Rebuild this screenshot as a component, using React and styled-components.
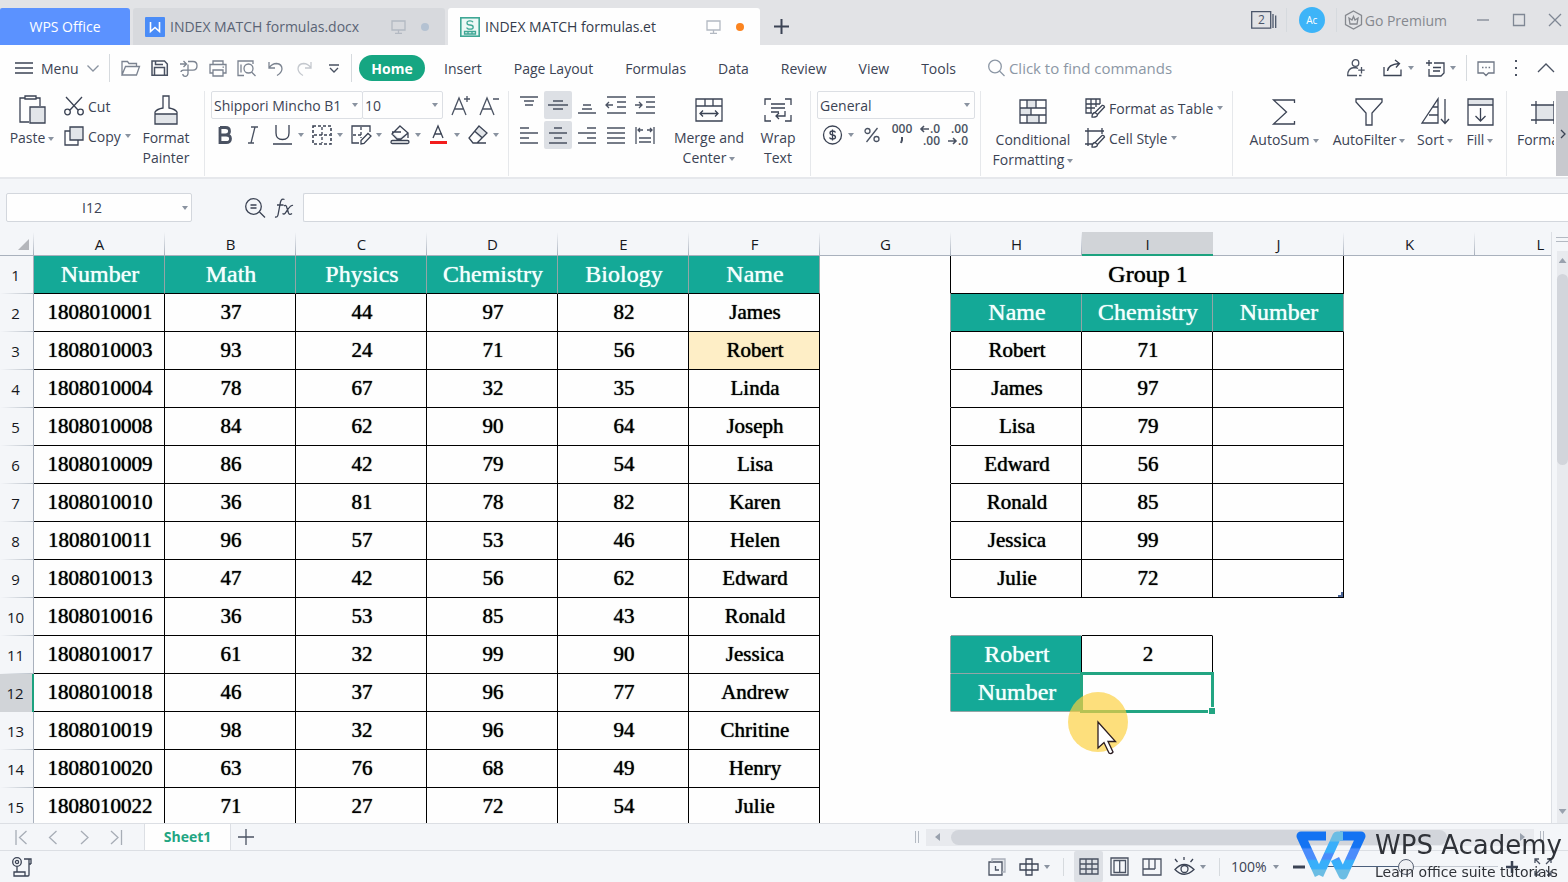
import React from "react";
import styled, { createGlobalStyle } from "styled-components";

const GlobalStyle = createGlobalStyle`
  * {
    box-sizing: border-box;
  }

  body {
    margin: 0;
    font-family: "Open Sans", "Noto Sans", sans-serif;
    font-size: 14px;
    color: #3b4354;
    background: #f4f6f9;
    overflow: hidden;
  }

  button,
  input,
  select {
    font: inherit;
    color: inherit;
  }
`;

const Page = styled.div`
  display: flex;
  flex-direction: column;
  height: 100vh;
  overflow: hidden;
`;

const Svg = styled.svg`
  display: block;
  flex: none;
  fill: none;
  stroke: currentColor;
  stroke-width: ${(props) => props.$sw || 1.3};
  overflow: visible;
`;

const PlainButton = styled.button`
  display: flex;
  align-items: center;
  padding: 0;
  border: 0;
  background: none;
  white-space: nowrap;
`;

const Divider = styled.span`
  flex: none;
  width: 1px;
  height: ${(props) => props.$height || 28}px;
  margin-right: ${(props) => props.$after || 0}px;
  background: #d6dade;
`;

const Spacer = styled.span`
  flex: 1;
`;

const CaretShape = styled.span`
  display: inline-block;
  flex: none;
  margin-left: ${(props) => (props.$inline ? "3px" : "0")};
  border: 3px solid transparent;
  border-top: 4px solid #8a93a0;
  border-bottom: 0;
  vertical-align: middle;
`;

/* Title bar */

const TitleBar = styled.header`
  display: flex;
  flex: none;
  height: 45px;
  background: #e2e3e6;
`;

const FileTabs = styled.nav`
  display: flex;
  align-items: flex-end;
  gap: 3px;
`;

const OfficeTab = styled.button`
  width: 130px;
  height: 37px;
  border: 0;
  border-radius: 2px 3px 0 0;
  background: #5b92ff;
  color: #fff;
`;

const FileTab = styled.button`
  display: flex;
  align-items: center;
  width: 312px;
  height: 37px;
  padding: 0 16px 0 12px;
  border: 0;
  border-radius: 3px 3px 0 0;
  background: ${(props) => (props.$active ? "#fefefe" : "#d7d9dd")};
  color: ${(props) => (props.$active ? "#343b4b" : "#5a6475")};
`;

const FileName = styled.span`
  flex: 1;
  padding-left: 5px;
  text-align: left;
  white-space: nowrap;
`;

const Dot = styled.span`
  width: 8px;
  height: 8px;
  margin-left: 15px;
  border-radius: 50%;
  background: ${(props) => props.$color};
`;

const NewTab = styled(PlainButton)`
  height: 37px;
  padding: 0 11px;
`;

const WindowTools = styled.div`
  display: flex;
  align-items: center;
  height: 40px;
  margin-left: auto;
  padding-right: 3px;
  color: #7f8794;
`;

const Avatar = styled.button`
  width: 26px;
  height: 26px;
  margin: 0 11px 0 12px;
  padding: 0;
  border: 0;
  border-radius: 50%;
  background: #3db4f8;
  color: #fff;
  font-size: 10px;
`;

const Premium = styled(PlainButton)`
  gap: 2px;
  margin: 0 18px 0 7px;
  color: #85888e;
`;

const WindowButton = styled(PlainButton)`
  justify-content: center;
  width: 36px;

  &:last-child {
    width: 20px;
    margin-left: 8px;
  }
`;

/* Menu bar */

const MenuBar = styled.div`
  display: flex;
  align-items: center;
  flex: none;
  height: 46px;
  background: #fefefe;
`;

const MenuButton = styled(PlainButton)`
  gap: 8px;
  width: 109px;
  padding-left: 15px;
  color: #3b4354;
`;

const QuickTools = styled.div`
  display: flex;
  padding: 0 3px 0 6px;
`;

const IconButton = styled(PlainButton)`
  justify-content: center;
  width: ${(props) => props.$width || 29}px;
  height: 28px;
  color: ${(props) => props.$color || "#4a5262"};
  background: ${(props) => (props.$active ? "#dde0e5" : "none")};
  border-radius: 2px;
`;

const SplitButton = styled(PlainButton)`
  gap: 5px;
  width: ${(props) => props.$width || 39}px;
  height: 28px;
  padding-left: 6px;
`;

const MenuTabs = styled.nav`
  display: flex;
  align-items: center;
  padding-left: 7px;
`;

const MenuTab = styled.button`
  height: 26px;
  padding: 0 16px;
  border: 0;
  background: none;
  white-space: nowrap;
`;

const ActiveTab = styled(MenuTab)`
  width: 66px;
  margin-right: 3px;
  padding: 0;
  border-radius: 13px;
  background: #16a682;
  color: #fff;
  font-weight: 700;
`;

const CommandSearch = styled.label`
  display: flex;
  align-items: center;
  gap: 4px;
  margin-left: 16px;
  color: #8c97a5;
`;

const CommandInput = styled.input`
  width: 190px;
  padding: 0;
  border: 0;
  background: none;
  font-size: 15px;
  outline: none;

  &::placeholder {
    color: #8c97a5;
    opacity: 1;
  }
`;

const MenuTools = styled.div`
  display: flex;
  align-items: center;
  margin-left: auto;
  padding-right: 3px;
`;

/* Ribbon */

const RibbonBar = styled.section`
  display: flex;
  flex: none;
  gap: 2px;
  height: 88px;
  border-bottom: 2px solid #e6e8ec;
  background: #fefefe;
`;

const RibbonTools = styled.div`
  display: flex;
  flex: 1;
  min-width: 0;
  overflow: hidden;
`;

const RibbonGroup = styled.div`
  display: flex;
  flex: none;
  align-items: flex-start;
  height: 85px;
  padding: ${(props) => props.$padding || "0"};
  border-right: 1px solid #e6e8eb;

  &:last-child {
    border-right: 0;
  }
`;

const ToolRows = styled.div`
  display: flex;
  flex-direction: column;
  gap: 2px;
`;

const ToolRow = styled.div`
  display: flex;
  align-items: center;
  gap: ${(props) => props.$gap || 0}px;
  height: 28px;
`;

const BigButton = styled.button`
  display: flex;
  flex-direction: column;
  align-items: center;
  width: ${(props) => props.$width}px;
  padding: 0;
  border: 0;
  background: none;
  line-height: 20px;
  white-space: nowrap;
`;

const BigIcon = styled.span`
  display: flex;
  align-items: center;
  height: 37px;
`;

const ListButtons = styled.div`
  width: ${(props) => props.$width}px;
`;

const ListButton = styled(PlainButton)`
  gap: 4px;
  height: 30px;
`;

const SelectBox = styled.span`
  position: relative;
  display: block;
  width: ${(props) => props.$width}px;
  margin-left: ${(props) => (props.$joined ? "-1px" : "0")};
  margin-right: ${(props) => (props.$joined ? "3px" : "0")};

  &::after {
    content: "";
    position: absolute;
    top: 12px;
    right: 5px;
    border: 3px solid transparent;
    border-top: 4px solid #8a93a0;
    border-bottom: 0;
    pointer-events: none;
  }
`;

const Select = styled.select`
  display: block;
  width: 100%;
  height: 28px;
  padding: 0 2px;
  border: 1px solid #dcdfe4;
  border-radius: 2px;
  background: #fefefe;
  appearance: none;
`;

const NumberMark = styled.span`
  display: flex;
  flex-direction: column;
  align-items: ${(props) => (props.$center ? "center" : "flex-end")};
  font-size: 12px;
  line-height: 12px;
  font-weight: 600;
`;

const MarkLine = styled.span`
  display: flex;
  align-items: center;
  gap: 1px;
`;

const RibbonHandle = styled.button`
  flex: none;
  width: 12px;
  height: 85px;
  padding: 0;
  border: 0;
  background: #c8c9ce;
`;

/* Formula bar */

const FormulaBar = styled.div`
  display: flex;
  align-items: center;
  flex: none;
  height: 53px;
  padding: 4px 0 0 6px;
`;

const NameBox = styled.span`
  display: flex;
  align-items: center;
  width: 186px;
  height: 29px;
  padding-right: 3px;
  border: 1px solid #d3d7dd;
  border-radius: 2px;
  background: #fefefe;
`;

const NameInput = styled.input`
  flex: 1;
  min-width: 0;
  padding: 0 5px 0 0;
  border: 0;
  background: none;
  text-align: center;
`;

const FormulaTools = styled.div`
  display: flex;
  gap: 9px;
  padding: 0 9px 0 53px;
`;

const FormulaInput = styled.input`
  flex: 1;
  min-width: 0;
  height: 29px;
  border: 1px solid #d3d7dd;
  border-right: 0;
  border-radius: 2px 0 0 2px;
  background: #fefefe;
`;

/* Sheet */

const SheetArea = styled.main`
  display: flex;
  flex: 1;
  min-height: 0;
`;

const SheetView = styled.div`
  flex: 1;
  min-width: 0;
  overflow: hidden;
  background: linear-gradient(#f4f6f9 23px, #a9b1bd 23px, #a9b1bd 24px, #fefefe 24px);
`;

const Grid = styled.table`
  width: 1606px;
  table-layout: fixed;
  border-collapse: separate;
  border-spacing: 0;
`;

const Corner = styled.td`
  width: 34px;
  height: 24px;
  padding: 0 5px 5px 0;
  border-bottom: 1px solid #a9b1bd;
  background: linear-gradient(#f4f6f9, #a9b1bd) right / 1px 100% no-repeat #f4f6f9;
  vertical-align: bottom;
`;

const CornerShape = styled.span`
  display: block;
  width: 11px;
  height: 11px;
  margin-left: auto;
  background: #b4b6bb;
  clip-path: polygon(100% 0, 100% 100%, 0 100%);
`;

const ColumnHead = styled.th`
  width: 131px;
  height: 24px;
  padding: 0;
  border-bottom: 1px solid ${(props) => (props.$active ? "#1ca27f" : "#a9b1bd")};
  box-shadow: ${(props) => (props.$active ? "inset 0 -1px #1ca27f" : "none")};
  background: ${(props) =>
    props.$active
      ? "#d1d4d8"
      : "linear-gradient(#f4f6f9, #a9b1bd) right / 1px 100% no-repeat #f4f6f9"};
  color: #16181d;
  font-size: 15px;
  font-weight: 400;
  line-height: 20px;
`;

const RowHead = styled.th`
  height: 38px;
  padding: 0 2px 0 0;
  border-right: ${(props) => (props.$active ? "2px solid #1ca27f" : "1px solid #a9b1bd")};
  background: ${(props) =>
    props.$active
      ? "#d1d4d8"
      : "linear-gradient(90deg, #f4f6f9, #b9c0c9) bottom / 100% 1px no-repeat #f4f6f9"};
  color: #16181d;
  font-size: 15px;
  font-weight: 400;
`;

const Cell = styled.td`
  position: relative;
  height: 38px;
  padding: 0 0 0 2px;
  border-right: 1px solid ${(props) => props.$right || "transparent"};
  border-bottom: 1px solid ${(props) => props.$bottom || "transparent"};
  background: ${(props) => props.$fill || "#fefefe"};
  color: #000;
  font-family: "Liberation Serif", "Times New Roman", serif;
  font-size: ${(props) => (props.$title ? 24 : 21)}px;
  font-weight: 400;
  line-height: 35px;
  text-align: center;
  text-shadow: 0 0 1px currentColor;
`;

const HeadCell = styled(Cell)`
  background: #14a997;
  color: #f4fffd;
  font-size: 24px;
`;

const TableMark = styled.span`
  position: absolute;
  right: 0;
  bottom: 0;
  width: 5px;
  height: 5px;
  background: #4a6496;
  clip-path: polygon(60% 0, 100% 0, 100% 100%, 0 100%, 0 60%, 60% 60%);
`;

const Selection = styled.span`
  position: absolute;
  z-index: 1;
  inset: -2px;
  border: 3px solid #22a582;

  &::after {
    content: "";
    position: absolute;
    right: -4px;
    bottom: -4px;
    width: 6px;
    height: 6px;
    border: solid #fefefe;
    border-width: 1px 0 0 1px;
    background: #22a582;
  }
`;

const Pointer = styled.span`
  position: absolute;
  z-index: 2;
  top: 18px;
  left: -14px;
  width: 60px;
  height: 60px;
  padding: 29px 0 0 29px;
  border-radius: 50%;
  background: rgba(252, 208, 62, 0.68);
`;

const VerticalScroll = styled.div`
  display: flex;
  flex-direction: column;
  flex: none;
  width: 17px;
  padding: 5px 0 8px 4px;
  border-left: 1px solid #dcdfe4;
  background: #f4f6f9;
`;

const SplitGrip = styled.span`
  height: 5px;
  border: solid #b3b9c2;
  border-width: 1px 0;
`;

const VerticalTrack = styled.div`
  display: flex;
  flex-direction: column;
  flex: 1;
  align-items: center;
  margin: 9px 0 -8px 1px;
  padding: 7px 0 9px;
  background: #e8eaee;
`;

const VerticalThumb = styled.span`
  width: 100%;
  height: 191px;
  margin: 11px 0 auto;
  border-radius: 6px;
  background: #d2d5db;
`;

const Arrow = styled.span`
  flex: none;
  width: ${(props) => (props.$side ? 5 : 8)}px;
  height: ${(props) => (props.$side ? 8 : 5)}px;
  background: #9aa2ae;
  clip-path: ${(props) => props.$shape};
`;

/* Sheet tabs */

const SheetTabs = styled.div`
  display: flex;
  align-items: center;
  flex: none;
  height: 28px;
  padding-right: 24px;
  border-top: 1px solid #dcdfe4;
  border-bottom: 1px solid #dcdfe4;
`;

const SheetNav = styled.div`
  display: flex;
  width: 144px;
  padding-left: 5px;
`;

const SheetTab = styled.button`
  width: 87px;
  height: 27px;
  border: 1px solid #dcdfe4;
  border-top: 0;
  background: #fefefe;
  color: #22a582;
  font-weight: 700;
`;

const Grip = styled.span`
  flex: none;
  width: 4px;
  height: 12px;
  border: solid #b3b9c2;
  border-width: 0 1px;
`;

const HorizontalTrack = styled.div`
  display: flex;
  align-items: center;
  width: 608px;
  height: 17px;
  margin: 0 6px 0 7px;
  padding: 0 9px 0 9px;
  background: #e8eaee;
`;

const HorizontalThumb = styled.span`
  width: 496px;
  height: 15px;
  margin: 0 auto 0 11px;
  border-radius: 8px;
  background: #d2d5db;
`;

/* Status bar */

const StatusBar = styled.footer`
  display: flex;
  align-items: center;
  flex: none;
  height: 31px;
  padding: 0 0 0 12px;
`;

const ViewButton = styled(IconButton)`
  height: 31px;
  width: ${(props) => props.$width || 32}px;
`;

const ZoomLevel = styled(PlainButton)`
  gap: 6px;
  width: 62px;
  padding-left: 11px;
`;

const ZoomSlider = styled.input`
  width: 188px;
  height: 18px;
  margin: 0 8px 0 4px;
  appearance: none;
  background: linear-gradient(90deg, #4b5f7c 51%, #c5cad2 51%) center / 100% 1px no-repeat;

  &::-webkit-slider-thumb {
    appearance: none;
    width: 16px;
    height: 16px;
    border: 1px solid #596273;
    border-radius: 50%;
    background: #f0f1f4;
  }
`;

const Brand = styled.aside`
  position: fixed;
  z-index: 3;
  right: 8px;
  bottom: 0;
  display: flex;
  gap: 9px;
  height: 51px;
  color: #2f3238;
  font-family: "DejaVu Sans", sans-serif;
  white-space: nowrap;
  pointer-events: none;
`;

const BrandText = styled.div`
  width: 185px;
`;

const BrandName = styled.div`
  font-size: 26px;
  line-height: 28px;
`;

const BrandLine = styled.div`
  margin-top: 3px;
  font-size: 14px;
  line-height: 20px;
`;

const teal = "#14a997";
const black = "#000";
const grey = "#93a5a6";

const columns = ["A", "B", "C", "D", "E", "F", "G", "H", "I", "J", "K", "L"];

const headings = ["Number", "Math", "Physics", "Chemistry", "Biology", "Name"];

const students = [
  ["1808010001", 37, 44, 97, 82, "James"],
  ["1808010003", 93, 24, 71, 56, "Robert"],
  ["1808010004", 78, 67, 32, 35, "Linda"],
  ["1808010008", 84, 62, 90, 64, "Joseph"],
  ["1808010009", 86, 42, 79, 54, "Lisa"],
  ["1808010010", 36, 81, 78, 82, "Karen"],
  ["1808010011", 96, 57, 53, 46, "Helen"],
  ["1808010013", 47, 42, 56, 62, "Edward"],
  ["1808010016", 36, 53, 85, 43, "Ronald"],
  ["1808010017", 61, 32, 99, 90, "Jessica"],
  ["1808010018", 46, 37, 96, 77, "Andrew"],
  ["1808010019", 98, 32, 96, 94, "Chritine"],
  ["1808010020", 63, 76, 68, 49, "Henry"],
  ["1808010022", 71, 27, 72, 54, "Julie"],
];

const group = [
  ["Robert", 71],
  ["James", 97],
  ["Lisa", 79],
  ["Edward", 56],
  ["Ronald", 85],
  ["Jessica", 99],
  ["Julie", 72],
];

const menuTabs = ["Insert", "Page Layout", "Formulas", "Data", "Review", "View", "Tools"];

function Icon({ w = 20, h = 20, d, fill, sw, color, children }) {
  return (
    <Svg width={w} height={h} viewBox={`0 0 ${w} ${h}`} $sw={sw} color={color} aria-hidden="true">
      {fill && <path d={fill} fill="#e2e5e9" stroke="none" />}
      {d && <path d={d} />}
      {children}
    </Svg>
  );
}

function Monitor() {
  return <Icon w={15} h={14} color="#b3b9c2" d="M1 1h13v9h-13zM7.500 10v3M4 13.300h7" />;
}

function TopBar() {
  return (
    <TitleBar>
      <FileTabs>
        <OfficeTab>WPS Office</OfficeTab>
        <FileTab>
          <Icon>
            <rect width="20" height="20" rx="1" fill="#4a8cf7" stroke="none" />
            <path d="M5.500 5v9.500l4.500-4 4.500 4V5" stroke="#fff" strokeWidth="1.600" />
          </Icon>
          <FileName>INDEX MATCH formulas.docx</FileName>
          <Monitor />
          <Dot $color="#b4c2d2" />
        </FileTab>
        <FileTab $active>
          <Icon>
            <rect x=".8" y=".8" width="18.400" height="18.400" stroke="#3fa795" strokeWidth="1.600" fill="#ecf8f5" />
            <path
              d="M13 5.200Q12.500 3.800 10 3.800Q7 3.800 7 6Q7 8 10 8Q13.200 8 13.200 10.200Q13.200 12.200 10 12.200Q7 12.200 6.800 10.500M4.500 14.500h11v2.500h-11zM8 14.500v2.500M12 14.500v2.500"
              stroke="#3fa795"
            />
          </Icon>
          <FileName>INDEX MATCH formulas.et</FileName>
          <Monitor />
          <Dot $color="#fb8420" />
        </FileTab>
        <NewTab aria-label="New tab">
          <Icon w={15} h={15} sw={2} d="M7.500 0v15M0 7.500h15" />
        </NewTab>
      </FileTabs>
      <WindowTools>
        <PlainButton aria-label="Open windows">
          <Icon w={35} h={18} color="#4b566a" d="M.700.700h19v16.500h-19zM22 3v14M24.700 4.500v12.500">
            <text x="7" y="13" fontSize="12" fill="currentColor" stroke="none">2</text>
          </Icon>
        </PlainButton>
        <Divider $height={24} />
        <Avatar>Ac</Avatar>
        <Divider $height={24} />
        <Premium>
          <Icon w={19} h={20} d="M9.500 1l8 4.500v9l-8 4.500-8-4.500v-9zM5 8l1 6h7l1-6-3 2-1.500-3.500-1.500 3.500z" />
          Go Premium
        </Premium>
        <WindowButton aria-label="Minimize">
          <Icon w={12} h={12} d="M0 6h12" />
        </WindowButton>
        <WindowButton aria-label="Maximize">
          <Icon w={12} h={12} d="M.500.500h11v11h-11z" />
        </WindowButton>
        <WindowButton aria-label="Close">
          <Icon w={12} h={12} d="M0 0l12 12M12 0l-12 12" />
        </WindowButton>
      </WindowTools>
    </TitleBar>
  );
}

function Menu() {
  return (
    <MenuBar>
      <MenuButton>
        <Icon w={18} h={12} d="M0 1h18M0 6h18M0 11h18" />
        Menu
        <Icon w={12} h={7} color="#8a93a0" d="M.500.500l5.500 5.500 5.500-5.500" />
      </MenuButton>
      <Divider />
      <QuickTools>
        <IconButton aria-label="Open" $color="#7b8390">
          <Icon w={19} h={16} d="M1 15V1.500h5.500l1.500 2h7.500v3M1 15l3.500-8.500h14l-3 8.500z" />
        </IconButton>
        <IconButton aria-label="Save">
          <Icon w={17} h={16} d="M1 1h12.500l2.800 3v11.300h-15.300zM3.500 15V7.500h10v7.500M4.500 1v3.500h7.500" sw={1.5} />
        </IconButton>
        <IconButton aria-label="Export to PDF" $color="#7b8390">
          <Icon w={18} h={17} d="M0 4h6M3.500 1l3 3-3 3M8 1.500h5q4 0 4 4.300t-4 4.300h-9.500q-2.500.200-2.500 2M8 4.500v9q-.300 2.800-2.700 2.800t-2.500-2.300" />
        </IconButton>
        <IconButton aria-label="Print" $color="#7b8390">
          <Icon w={18} h={17} d="M4 4.500V1h10v3.500M4 13H1V4.500h16v8.500h-3M4 10h10v6h-10zM13.500 7.200h1.500" />
        </IconButton>
        <IconButton aria-label="Print preview" $color="#7b8390">
          <Icon w={19} h={17} d="M7 15.500h-6V1h15v3M4 4.500v8M14.500 12l4 4">
            <circle cx="11.500" cy="8.500" r="4.500" />
          </Icon>
        </IconButton>
        <IconButton aria-label="Undo" $color="#7b8390">
          <Icon w={15} h={15} d="M1 1v6h6M1 7Q4 2.500 8.500 2.500Q14 3 14 8Q13.500 12 9 14.500" />
        </IconButton>
        <IconButton aria-label="Redo" $color="#c4c8ce">
          <Icon w={15} h={15} d="M14 1v6h-6M14 7Q11 2.500 6.500 2.500Q1 3 1 8Q1.500 12 6 14.500" />
        </IconButton>
        <IconButton aria-label="Customize toolbar">
          <Icon w={10} h={9} d="M0 1h10M1 4l4 4 4-4" />
        </IconButton>
      </QuickTools>
      <Divider />
      <MenuTabs>
        <ActiveTab>Home</ActiveTab>
        {menuTabs.map((name) => (
          <MenuTab key={name}>{name}</MenuTab>
        ))}
      </MenuTabs>
      <CommandSearch>
        <Icon w={17} h={18} d="M11.500 12l5 5">
          <circle cx="7" cy="7.500" r="6.300" />
        </Icon>
        <CommandInput aria-label="Find commands" placeholder="Click to find commands" />
      </CommandSearch>
      <MenuTools>
        <IconButton aria-label="Add user" $width={42}>
          <Icon w={18} h={18} d="M10 16.500h-9.300Q.700 9 7 8.500q2.500 0 4 1M14.500 8v6.500M11.200 11.200h6.500M14.500 16.500h-2.500">
            <circle cx="8.500" cy="4" r="3.300" />
          </Icon>
        </IconButton>
        <SplitButton aria-label="Share" $width={43}>
          <Icon w={20} h={18} d="M1 8v8.500h17v-6M4.500 12Q5 5.500 16 4.500M12 1l4.500 3.500-3.500 4" />
          <CaretShape />
        </SplitButton>
        <SplitButton aria-label="New note" $width={46}>
          <Icon w={19} h={17} d="M3 0v6M0 3h6M8 3h10v10l-3 3h-12V9M7 7.500h8M7 11h7" />
          <CaretShape />
        </SplitButton>
        <Divider $height={26} />
        <IconButton aria-label="Comments" $width={38} $color="#6f7785">
          <Icon w={18} h={15} d="M1 1h16v11h-5.500l-2.500 2.500-2.500-2.500h-5.500zM5 6.500h1.500M8.300 6.500h1.500M11.600 6.500h1.500" />
        </IconButton>
        <IconButton aria-label="More" $width={22}>
          <Icon w={4} h={16} sw={2} d="M2 0v2M2 7v2M2 14v2" />
        </IconButton>
        <IconButton aria-label="Collapse ribbon" $width={38}>
          <Icon w={18} h={10} d="M1 9l8-8 8 8" />
        </IconButton>
      </MenuTools>
    </MenuBar>
  );
}

function Big({ width, icon, lines, caret }) {
  return (
    <BigButton $width={width}>
      <BigIcon>{icon}</BigIcon>
      {lines.map((line, i) => (
        <span key={line}>
          {line}
          {caret && i === lines.length - 1 && <CaretShape $inline />}
        </span>
      ))}
    </BigButton>
  );
}

function Ribbon() {
  return (
    <RibbonBar>
      <RibbonTools>
        <RibbonGroup $padding="0 8px 0 0">
          <Big
            width={64}
            caret
            lines={["Paste"]}
            icon={
              <Icon w={27} h={30} fill="M11 12h15v16h-15z" d="M6 3h-5v24h9M17 3h4v8M6 1h11v3h-11zM11 12h15v16h-15z" />
            }
          />
          <ListButtons $width={72}>
            <ListButton>
              <Icon w={20} h={20} d="M2 1l12 13M18 1l-12 13">
                <circle cx="3.500" cy="16" r="2.800" />
                <circle cx="16.500" cy="16" r="2.800" />
              </Icon>
              Cut
            </ListButton>
            <ListButton>
              <Icon fill="M6 1h13v13h-13z" d="M6 1h13v13h-13zM6 5h-5v14h13v-5" />
              Copy
              <CaretShape />
            </ListButton>
          </ListButtons>
          <Big
            width={60}
            lines={["Format", "Painter"]}
            icon={
              <Icon w={24} h={30} fill="M1 19h22v10h-22z" d="M9 1h6v12q6 1 8 4v12h-22v-12q2-3 8-4zM1 19h22" />
            }
          />
        </RibbonGroup>

        <RibbonGroup $padding="0 6px">
          <ToolRows>
            <ToolRow>
              <SelectBox $width={152}>
                <Select aria-label="Font">
                  <option>Shippori Mincho B1</option>
                </Select>
              </SelectBox>
              <SelectBox $width={81} $joined>
                <Select aria-label="Font size">
                  <option>10</option>
                </Select>
              </SelectBox>
              <IconButton $width={28} aria-label="Increase font size">
                <Icon w={19} h={19} d="M1 19l7-17 7 17M3.500 13h9M16 0v6M13 3h6" />
              </IconButton>
              <IconButton $width={28} aria-label="Decrease font size">
                <Icon w={19} h={19} d="M1 19l7-17 7 17M3.500 13h9M14 3h6" />
              </IconButton>
            </ToolRow>
            <ToolRow>
              <IconButton $width={28} aria-label="Bold">
                <Icon w={14} h={18} sw={2.8} d="M2 1.500h5.500q4 0 4 3.700t-4 3.700h-5.500M2 9h6q4.500 0 4.500 3.800t-4.500 3.700h-6zM2 1v16" />
              </IconButton>
              <IconButton $width={28} aria-label="Italic">
                <Icon w={12} h={18} d="M4 1h7M1 17h6M8 1l-4 16" />
              </IconButton>
              <SplitButton aria-label="Underline">
                <Icon w={20} h={20} d="M3 0v8q0 6.500 6.500 6.500t6.500-6.500V0M0 19h19" />
                <CaretShape />
              </SplitButton>
              <SplitButton aria-label="Borders">
                <Icon>
                  <path d="M1 1h18v18h-18z" strokeDasharray="3 2" strokeWidth="1.600" />
                  <path d="M10 2v16M2 10h16" strokeDasharray="3 2" />
                </Icon>
                <CaretShape />
              </SplitButton>
              <SplitButton aria-label="Draw borders">
                <Icon d="M19 7V1h-18v17h7M10 19v-3.500l7-7 3 2.500-7 7.500z">
                  <path d="M2 10h10M10 2v11" strokeDasharray="3 2" />
                </Icon>
                <CaretShape />
              </SplitButton>
              <SplitButton aria-label="Fill colour">
                <Icon fill="M3 8l6 5 8-5-2 5h-10z" d="M10 1l8 7-7 6h-4l-5-5zM2 7h9M18 8v5M2.500 15.500h15q1.500 0 1.500 1.500t-1.500 1.500h-15q-1.500 0-1.500-1.500t1.500-1.500z" />
                <CaretShape />
              </SplitButton>
              <SplitButton aria-label="Font colour">
                <Icon d="M4 13l5-12 5 12M6 9h7">
                  <path d="M1 17.500h17" stroke="#f21d1d" strokeWidth="3" />
                </Icon>
                <CaretShape />
              </SplitButton>
              <SplitButton aria-label="Clear">
                <Icon fill="M11 1l8 7-6 6-7-7z" d="M11 1l8 7-10 10h-4l-4-5zM6.500 6l8 7M9 18h9" />
                <CaretShape />
              </SplitButton>
            </ToolRow>
          </ToolRows>
        </RibbonGroup>

        <RibbonGroup $padding="0 13px 0 6px">
          <ToolRows>
            <ToolRow $gap={1}>
              <IconButton $width={28} aria-label="Align top">
                <Icon w={18} h={18} d="M0 1h18M4 5h10M5 9h8" />
              </IconButton>
              <IconButton $width={28} $active aria-label="Align middle">
                <Icon w={20} h={18} d="M5 5h10M0 9h20M5 13h10" />
              </IconButton>
              <IconButton $width={28} aria-label="Align bottom">
                <Icon w={18} h={18} d="M5 9h8M4 13h10M0 17h18" />
              </IconButton>
              <IconButton $width={28} aria-label="Decrease indent">
                <Icon w={20} h={18} d="M1 1h19M11 6h9M11 11h9M1 17h19M0 9h7M3 6l-3 3 3 3" />
              </IconButton>
              <IconButton $width={28} aria-label="Increase indent">
                <Icon w={20} h={18} d="M1 1h19M11 6h9M11 11h9M1 17h19M0 9h7M4 6l3 3-3 3" />
              </IconButton>
            </ToolRow>
            <ToolRow $gap={1}>
              <IconButton $width={28} aria-label="Align left">
                <Icon w={18} h={17} d="M0 1h9M0 6h18M0 11h9M0 16h18" />
              </IconButton>
              <IconButton $width={28} $active aria-label="Align centre">
                <Icon w={18} h={17} d="M5 1h8M0 6h18M5 11h8M0 16h18" />
              </IconButton>
              <IconButton $width={28} aria-label="Align right">
                <Icon w={18} h={17} d="M9 1h9M0 6h18M9 11h9M0 16h18" />
              </IconButton>
              <IconButton $width={28} aria-label="Justify">
                <Icon w={18} h={17} d="M0 1h18M0 6h18M0 11h18M0 16h18" />
              </IconButton>
              <IconButton $width={28} aria-label="Distribute">
                <Icon w={20} h={18} d="M1 1v17M19 1v17M4 12h12M4 16h12M3 4h5M5 2l-2 2 2 2M12 4h5M15 2l2 2-2 2" />
              </IconButton>
            </ToolRow>
          </ToolRows>
          <Big
            width={100}
            caret
            lines={["Merge and", "Center"]}
            icon={
              <Icon w={28} h={24} d="M1 1h26v22h-26zM1 8h26M10 1v7M18 1v7M5 15.500h18M8 12.500l-3 3 3 3M20 12.500l3 3-3 3" />
            }
          />
          <Big
            width={38}
            lines={["Wrap", "Text"]}
            icon={
              <Icon
                w={28}
                h={24}
                d="M1 7V1h6M21 1h6v6M1 17v6h6M21 23h6v-6M7 6h14M7 10h14M7 14h8M21 13v5h-9M15 15l-3 3 3 3"
              />
            }
          />
        </RibbonGroup>

        <RibbonGroup $padding="0 5px 0 6px">
          <ToolRows>
            <SelectBox $width={158}>
              <Select aria-label="Number format">
                <option>General</option>
              </Select>
            </SelectBox>
            <ToolRow>
              <SplitButton aria-label="Currency">
                <Icon>
                  <circle cx="9.500" cy="10" r="9" />
                  <path d="M12.500 7.500Q12 6 9.500 6Q7 6 7 8Q7 9.700 9.500 10Q12.500 10.300 12.500 12.200Q12.500 14 9.500 14Q7 14 6.500 12.500M9.500 4.500v11" />
                </Icon>
                <CaretShape />
              </SplitButton>
              <IconButton $width={32} aria-label="Percent">
                <Icon w={16} h={16} d="M13.500 1l-11 14">
                  <circle cx="3.500" cy="4" r="2.500" />
                  <circle cx="12.500" cy="12" r="2.500" />
                </Icon>
              </IconButton>
              <IconButton $width={28} aria-label="Thousands separator">
                <NumberMark $center>
                  <span>000</span>
                  <Icon w={4} h={12} sw={2} d="M2 2v3l-1 3" />
                </NumberMark>
              </IconButton>
              <IconButton $width={28} aria-label="Increase decimal">
                <NumberMark>
                  <MarkLine>
                    <Icon w={9} h={8} sw={1.6} d="M9 4h-8M4 1l-3 3 3 3" />
                    .0
                  </MarkLine>
                  <MarkLine>.00</MarkLine>
                </NumberMark>
              </IconButton>
              <IconButton $width={28} aria-label="Decrease decimal">
                <NumberMark>
                  <MarkLine>.00</MarkLine>
                  <MarkLine>
                    <Icon w={9} h={8} sw={1.6} d="M0 4h8M5 1l3 3-3 3" />
                    .0
                  </MarkLine>
                </NumberMark>
              </IconButton>
            </ToolRow>
          </ToolRows>
        </RibbonGroup>

        <RibbonGroup $padding="2px 0 0">
          <Big
            width={104}
            caret
            lines={["Conditional", "Formatting"]}
            icon={
              <Icon
                w={28}
                h={25}
                fill="M8 1h9v8h-9zM1 9h11v7h-11zM8 16h12v8h-12z"
                d="M1 1h26v23h-26zM1 9h26M1 16h26M8 1v8M17 1v8M12 9v7M8 16v8M20 16v8"
              />
            }
          />
          <ListButtons $width={147}>
            <ListButton>
              <Icon d="M15 6V1h-14v14h6M1 6h14M1 10h9M6 1v14M11 1v8M7 19q0-4 3-4.500l2.500 2q0 3-5.500 2.500zM10.500 14l6.500-6.500q2-.500 2.500 1.500l-7 7.500" />
              Format as Table
              <CaretShape />
            </ListButton>
            <ListButton>
              <Icon d="M0 3h19M0 16h7M3 0v18M17 0v6M7 19q0-4 3-4.500l2.500 2q0 3-5.500 2.500zM10.500 14l6.500-6.500q2-.500 2.500 1.500l-7 7.500" />
              Cell Style
              <CaretShape />
            </ListButton>
          </ListButtons>
        </RibbonGroup>

        <RibbonGroup $padding="2px 8px 0 5px">
          <Big
            width={92}
            caret
            lines={["AutoSum"]}
            icon={<Icon w={24} h={26} d="M22.500 4V1h-21l13 12-13 12h21v-3" />}
          />
          <Big
            width={78}
            caret
            lines={["AutoFilter"]}
            icon={<Icon w={28} h={28} d="M1 1h26v3l-10 11v12h-6v-12l-10-11z" />}
          />
          <Big
            width={54}
            caret
            lines={["Sort"]}
            icon={<Icon w={28} h={27} d="M1 25l16-24v24zM8 17h9M12 9h5M1 25h16M24 1v24M20 21l4 4.500 4-4.500" />}
          />
          <Big
            width={36}
            caret
            lines={["Fill"]}
            icon={
              <Icon w={27} h={28} fill="M1 1h25v6h-25z" d="M1 1h25v26h-25zM1 7h25M13.500 10v13M8.500 18l5 5 5-5" />
            }
          />
        </RibbonGroup>

        <RibbonGroup $padding="2px 0 0">
          <Big
            width={76}
            caret
            lines={["Format"]}
            icon={<Icon w={28} h={24} fill="M5 5h18v15h-18z" d="M0 5h28M0 20h28M5 1v23M23 1v23" />}
          />
        </RibbonGroup>
      </RibbonTools>
      <RibbonHandle aria-label="Scroll ribbon">
        <Icon w={12} h={10} d="M5 1l4 4-4 4" />
      </RibbonHandle>
    </RibbonBar>
  );
}

function Formula() {
  return (
    <FormulaBar>
      <NameBox>
        <NameInput aria-label="Name box" defaultValue="I12" />
        <CaretShape />
      </NameBox>
      <FormulaTools>
        <PlainButton aria-label="Find formula">
          <Icon w={21} h={20} d="M14.500 14l5.500 5.500M5.500 7h6M5.500 10h6">
            <circle cx="8.500" cy="8.500" r="7.800" />
          </Icon>
        </PlainButton>
        <PlainButton aria-label="Insert function">
          <Icon w={19} h={20} d="M9.500 1.500Q6.500 0 5.500 4L3 17Q2.500 19.500 0 19M2 7h6.500M9 8Q11 6 12 10L13.500 15Q14.500 17.500 17 15.500M18 7.500Q16 6.500 13.500 10.500L11 14Q9.500 17 7.500 15.500" />
        </PlainButton>
      </FormulaTools>
      <FormulaInput aria-label="Formula" />
    </FormulaBar>
  );
}

function SideCells({ row }) {
  if (row === 1) {
    return (
      <>
        <Cell $right={black} />
        <Cell colSpan={3} $title $right={black} $bottom={black}>Group 1</Cell>
      </>
    );
  }
  if (row === 2) {
    return (
      <>
        <Cell $right={grey} />
        <HeadCell as="th" $right={grey} $bottom={black}>Name</HeadCell>
        <HeadCell as="th" $right={grey} $bottom={black}>Chemistry</HeadCell>
        <HeadCell as="th" $right={grey} $bottom={black}>Number</HeadCell>
      </>
    );
  }
  if (row <= 9) {
    const [name, score] = group[row - 3];
    return (
      <>
        <Cell $right={black} />
        <Cell $right={black} $bottom={black}>{name}</Cell>
        <Cell $right={black} $bottom={black}>{score}</Cell>
        <Cell $right={black} $bottom={black}>{row === 9 && <TableMark />}</Cell>
      </>
    );
  }
  if (row === 10) {
    return (
      <>
        <Cell />
        <Cell $bottom={grey} />
        <Cell $bottom={black} />
        <Cell />
      </>
    );
  }
  if (row === 11) {
    return (
      <>
        <Cell $right={grey} />
        <HeadCell $right={black} $bottom={grey}>Robert</HeadCell>
        <Cell $right={black} $bottom={black}>2</Cell>
        <Cell />
      </>
    );
  }
  if (row === 12) {
    return (
      <>
        <Cell $right={grey} />
        <HeadCell $right={teal} $bottom={grey}>Number</HeadCell>
        <Cell>
          <Selection />
          <Pointer>
            <Icon w={19} h={34} color="#2b1d22">
              <path d="M1 1v26l6-5.500 5 10.500q2 1.500 4-1l-5-10.500h7.500z" fill="#fff" />
            </Icon>
          </Pointer>
        </Cell>
        <Cell />
      </>
    );
  }
  return (
    <>
      <Cell />
      <Cell />
      <Cell />
      <Cell />
    </>
  );
}

function Sheet() {
  return (
    <SheetArea>
      <SheetView>
        <Grid>
          <thead>
            <tr>
              <Corner><CornerShape /></Corner>
              {columns.map((name) => (
                <ColumnHead key={name} scope="col" $active={name === "I"}>{name}</ColumnHead>
              ))}
            </tr>
          </thead>
          <tbody>
            <tr>
              <RowHead scope="row">1</RowHead>
              {headings.map((name) => (
                <HeadCell as="th" key={name} $right={grey} $bottom={black}>{name}</HeadCell>
              ))}
              <SideCells row={1} />
              <Cell />
              <Cell />
            </tr>
            {students.map((student, i) => (
              <tr key={student[0]}>
                <RowHead scope="row" $active={i + 2 === 12}>{i + 2}</RowHead>
                {student.map((value, n) => (
                  <Cell
                    key={headings[n]}
                    $right={black}
                    $bottom={black}
                    $fill={i === 1 && n === 5 ? "#feeec6" : undefined}
                  >
                    {value}
                  </Cell>
                ))}
                <SideCells row={i + 2} />
                <Cell />
                <Cell />
              </tr>
            ))}
          </tbody>
        </Grid>
      </SheetView>
      <VerticalScroll aria-hidden="true">
        <SplitGrip />
        <VerticalTrack>
          <Arrow $shape="polygon(50% 0, 100% 100%, 0 100%)" />
          <VerticalThumb />
          <Arrow $shape="polygon(0 0, 100% 0, 50% 100%)" />
        </VerticalTrack>
      </VerticalScroll>
    </SheetArea>
  );
}

function Tabs() {
  return (
    <SheetTabs>
      <SheetNav>
        <IconButton $width={32} $color="#a7adb6" aria-label="First sheet">
          <Icon w={12} h={15} d="M1 0v15M11.500 1l-7 6.500 7 6.500" />
        </IconButton>
        <IconButton $width={30} $color="#a7adb6" aria-label="Previous sheet">
          <Icon w={9} h={15} d="M8.500 1l-7 6.500 7 6.500" />
        </IconButton>
        <IconButton $width={35} $color="#a7adb6" aria-label="Next sheet">
          <Icon w={9} h={15} d="M1 1l7 6.500-7 6.500" />
        </IconButton>
        <IconButton $width={28} $color="#a7adb6" aria-label="Last sheet">
          <Icon w={12} h={15} d="M1 1l7 6.500-7 6.500M11.500 0v15" />
        </IconButton>
      </SheetNav>
      <SheetTab>Sheet1</SheetTab>
      <IconButton aria-label="Add sheet">
        <Icon w={16} h={16} d="M8 0v16M0 8h16" />
      </IconButton>
      <Spacer />
      <Grip />
      <HorizontalTrack aria-hidden="true">
        <Arrow $side $shape="polygon(100% 0, 100% 100%, 0 50%)" />
        <HorizontalThumb />
        <Arrow $side $shape="polygon(0 0, 100% 50%, 0 100%)" />
      </HorizontalTrack>
      <Grip />
    </SheetTabs>
  );
}

function Status() {
  return (
    <StatusBar>
      <PlainButton aria-label="Macro recorder">
        <Icon d="M12 2h7v5M17 2v16q0 1-1 1h-14v-4h11v4M5 10v5M17 7h2">
          <circle cx="5" cy="5" r="4.300" />
          <circle cx="5" cy="5" r="1.600" />
        </Icon>
      </PlainButton>
      <Spacer />
      <ViewButton aria-label="History">
        <Icon w={18} h={18} fill="M4 1h13v13h-3v-10h-10z" d="M1 4h13v13h-13zM7.500 8v4h3.500">
          <path d="M4 4v-3h13v13h-3" stroke="#a9afb9" />
        </Icon>
      </ViewButton>
      <SplitButton aria-label="Cell highlight" $width={50}>
        <Icon w={20} h={18} d="M7 1h6v16h-6zM1 6h18v6h-18z" />
        <CaretShape />
      </SplitButton>
      <Divider $height={18} $after={10} />
      <ViewButton $active $width={29} aria-label="Normal view">
        <Icon w={20} h={17} d="M1 1h18v15h-18zM1 6h18M1 11h18M7 1v15M13 1v15" />
      </ViewButton>
      <ViewButton $width={33} aria-label="Page layout">
        <Icon w={19} h={19} d="M1 1h17v17h-17zM4 3.500h11.500v12h-11.500zM9.700 3.500v12" />
      </ViewButton>
      <ViewButton aria-label="Page break preview">
        <Icon w={20} h={18} d="M1 1h18v16h-18zM7 1v10M13 1v10M1 11h12" />
      </ViewButton>
      <SplitButton aria-label="Reading view" $width={51}>
        <Icon w={21} h={20} d="M1 12.500Q10 2.500 20 12.500Q10 22 1 12.500zM10 0v3M1 2l2.500 3M19 2l-2.500 3">
          <circle cx="10.500" cy="12" r="3.500" />
        </Icon>
        <CaretShape />
      </SplitButton>
      <Divider $height={18} />
      <ZoomLevel>
        100%
        <CaretShape />
      </ZoomLevel>
      <PlainButton aria-label="Zoom out">
        <Icon w={24} h={12} sw={3} d="M11 6h12" />
      </PlainButton>
      <ZoomSlider type="range" aria-label="Zoom" defaultValue="51" />
      <PlainButton aria-label="Zoom in">
        <Icon w={12} h={12} sw={2.5} d="M6 0v12M0 6h12" />
      </PlainButton>
      <IconButton aria-label="Full screen" $width={50}>
        <Icon w={18} h={18} d="M6 6l-5-5M1 5V1h4M12 6l5-5M13 1h4v4M6 12l-5 5M1 13v4h4M12 12l5 5M17 13v4h-4" />
      </IconButton>
    </StatusBar>
  );
}

function BrandMark() {
  return (
    <Brand>
      <svg width="70" height="51" viewBox="0 0 70 51" fill="none" strokeWidth="9" strokeLinejoin="round" aria-hidden="true">
        <defs>
          <linearGradient id="leg" x1="0" y1="0" x2="0" y2="48" gradientUnits="userSpaceOnUse">
            <stop offset=".34" stopColor="#1473f2" />
            <stop offset=".38" stopColor="#4b8cfb" />
            <stop offset=".58" stopColor="#4b8cfb" />
            <stop offset=".62" stopColor="#38affa" />
            <stop offset=".78" stopColor="#38affa" />
            <stop offset=".82" stopColor="#6bbde4" />
          </linearGradient>
          <linearGradient id="slash" x1="0" y1="0" x2="0" y2="48" gradientUnits="userSpaceOnUse">
            <stop offset=".2" stopColor="#6bbde4" />
            <stop offset=".24" stopColor="#38affa" />
            <stop offset=".44" stopColor="#38affa" />
            <stop offset=".48" stopColor="#4b8cfb" />
            <stop offset=".58" stopColor="#4b8cfb" />
            <stop offset=".62" stopColor="#38affa" />
            <stop offset=".78" stopColor="#38affa" />
            <stop offset=".82" stopColor="#6bbde4" />
          </linearGradient>
        </defs>
        <path d="M44 5h21l-18 39-8-16" stroke="url(#leg)" />
        <path d="M30 5h-25l18 39" stroke="url(#leg)" />
        <path d="M23 44l18-39h6" stroke="url(#slash)" />
      </svg>
      <BrandText>
        <BrandName>WPS Academy</BrandName>
        <BrandLine>Learn office suite tutorials</BrandLine>
      </BrandText>
    </Brand>
  );
}

function App() {
  return (
    <Page>
      <GlobalStyle />
      <TopBar />
      <Menu />
      <Ribbon />
      <Formula />
      <Sheet />
      <Tabs />
      <Status />
      <BrandMark />
    </Page>
  );
}

export default App;
